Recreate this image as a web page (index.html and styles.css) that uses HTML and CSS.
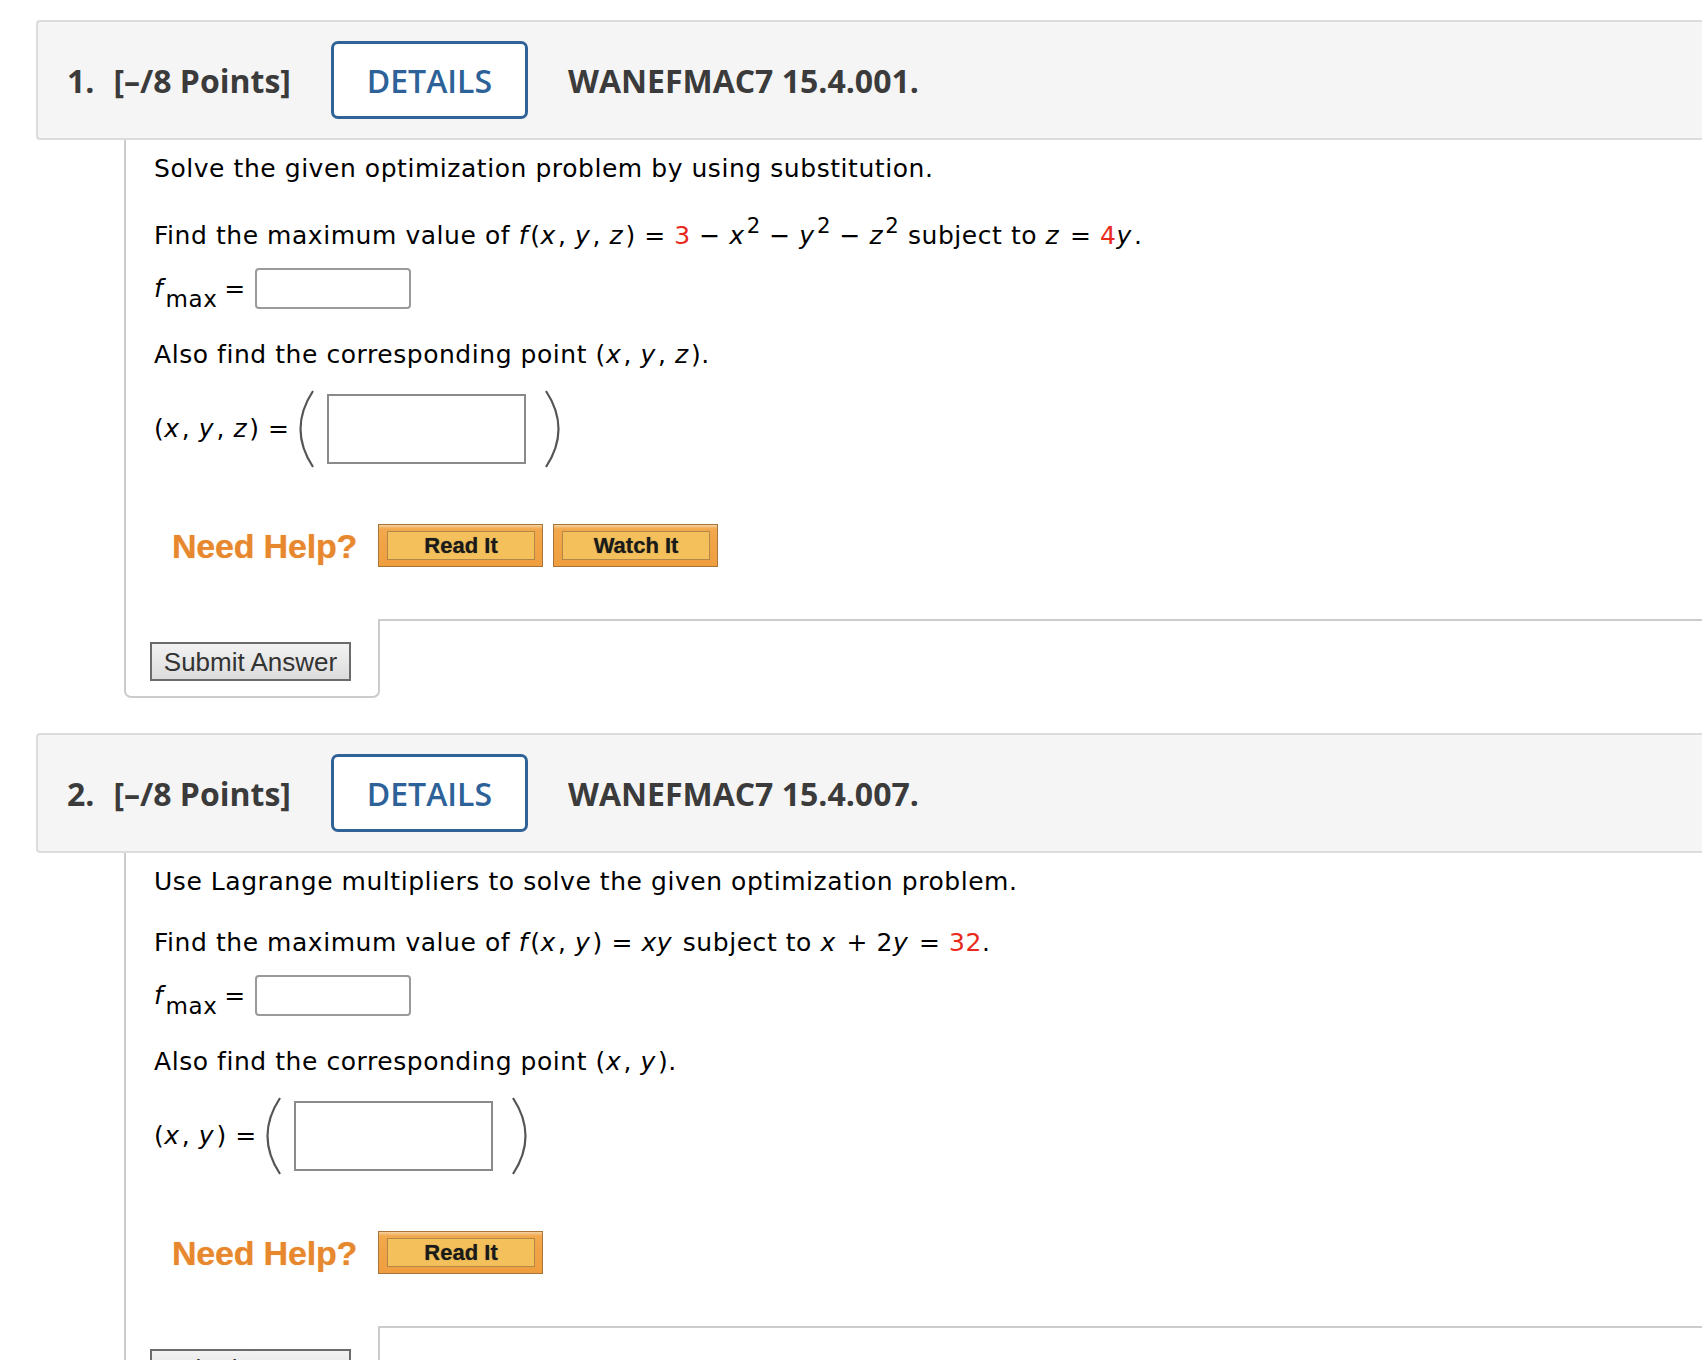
FILE: index.html
```html
<!DOCTYPE html>
<html lang="en">
<head>
<meta charset="utf-8">
<title>WebAssign</title>
<link rel="stylesheet" href="styles.css">
</head>
<body>
<div class="page">

  <section class="question">
    <header class="qhead">
      <span class="qnum">1.</span>
      <span class="qpts">[–/8 Points]</span>
      <button class="details">DETAILS</button>
      <span class="qid">WANEFMAC7 15.4.001.</span>
    </header>
    <div class="qbody">
      <div class="content">
        <p class="intro">Solve the given optimization problem by using substitution.</p>
        <p class="find">Find the maximum value of <i>f</i>(<i>x</i>, <i>y</i>, <i>z</i>) = <span class="red">3</span> − <i>x</i><sup>2</sup> − <i>y</i><sup>2</sup> − <i>z</i><sup>2</sup> subject to <i>z</i> = <span class="red">4</span><i>y</i>.</p>
        <div class="fmax"><span class="fm"><i>f</i><sub>max</sub></span><span class="eq">=</span><span class="inbox"></span></div>
        <p class="also">Also find the corresponding point (<i>x</i>, <i>y</i>, <i>z</i>).</p>
        <div class="point">
          <span class="lbl">(<i>x</i>, <i>y</i>, <i>z</i>) =</span>
          <svg class="paren" width="18" height="78" viewBox="0 0 18 78"><path d="M15 1 Q2.5 20 2.5 39 Q2.5 58 15 77" fill="none" stroke="#555" stroke-width="2.2"/></svg>
          <span class="bigbox"></span>
          <svg class="paren" width="18" height="78" viewBox="0 0 18 78"><path d="M3 1 Q15.5 20 15.5 39 Q15.5 58 3 77" fill="none" stroke="#555" stroke-width="2.2"/></svg>
        </div>
        <div class="help">
          <span class="need">Need Help?</span>
          <span class="hbtn"><span class="hin">Read It</span></span>
          <span class="hbtn"><span class="hin">Watch It</span></span>
        </div>
      </div>
      <div class="foot">
        <div class="tab"><button class="submit">Submit Answer</button></div>
        <div class="rest"></div>
      </div>
    </div>
  </section>

  <section class="question">
    <header class="qhead">
      <span class="qnum">2.</span>
      <span class="qpts">[–/8 Points]</span>
      <button class="details">DETAILS</button>
      <span class="qid">WANEFMAC7 15.4.007.</span>
    </header>
    <div class="qbody">
      <div class="content">
        <p class="intro">Use Lagrange multipliers to solve the given optimization problem.</p>
        <p class="find flat">Find the maximum value of <i>f</i>(<i>x</i>, <i>y</i>) = <i>xy</i> subject to <i>x</i> + 2<i>y</i> = <span class="red">32</span>.</p>
        <div class="fmax"><span class="fm"><i>f</i><sub>max</sub></span><span class="eq">=</span><span class="inbox"></span></div>
        <p class="also">Also find the corresponding point (<i>x</i>, <i>y</i>).</p>
        <div class="point">
          <span class="lbl">(<i>x</i>, <i>y</i>) =</span>
          <svg class="paren" width="18" height="78" viewBox="0 0 18 78"><path d="M15 1 Q2.5 20 2.5 39 Q2.5 58 15 77" fill="none" stroke="#555" stroke-width="2.2"/></svg>
          <span class="bigbox"></span>
          <svg class="paren" width="18" height="78" viewBox="0 0 18 78"><path d="M3 1 Q15.5 20 15.5 39 Q15.5 58 3 77" fill="none" stroke="#555" stroke-width="2.2"/></svg>
        </div>
        <div class="help">
          <span class="need">Need Help?</span>
          <span class="hbtn"><span class="hin">Read It</span></span>
        </div>
      </div>
      <div class="foot">
        <div class="tab"><button class="submit">Submit Answer</button></div>
        <div class="rest"></div>
      </div>
    </div>
  </section>

</div>
</body>
</html>
```

FILE: styles.css
```css
html, body {
  margin: 0;
  padding: 0;
  background: #fff;
  overflow: hidden;
}
.page {
  padding: 20px 0 0 36px;
  font-family: "DejaVu Sans", Verdana, sans-serif;
  color: #000;
}
.question {
  margin-bottom: 35px;
}
.qhead {
  display: flex;
  align-items: center;
  height: 116px;
  background: #f5f5f5;
  border: 2px solid #dcdcdc;
  border-right: none;
  border-radius: 4px 0 0 4px;
  padding-left: 29px;
  font-family: "Open Sans", sans-serif;
  font-weight: 700;
  font-size: 32px;
  color: #3b3b3b;
}
.qnum {
  margin-right: 19px;
}
.qpts {
  margin-right: 40px;
}
.details {
  box-sizing: border-box;
  width: 197px;
  height: 78px;
  border: 3px solid #2f6296;
  border-radius: 7px;
  background: #fff;
  color: #2d6298;
  font-family: "Open Sans", sans-serif;
  font-weight: 600;
  font-size: 32px;
  padding: 0;
  margin-right: 40px;
}
.qbody {
  margin-left: 88px;
}
.content {
  border-left: 2px solid #cccccc;
  padding: 14px 0 52px 28px;
  font-size: 25px;
  letter-spacing: 0.55px;
  line-height: 30px;
}
.content p {
  margin: 0;
}
.content i {
  font-style: italic;
  margin-right: 2.2px;
}
.red {
  color: #e8291c;
}
sup {
  font-size: 0.85em;
  line-height: 0;
  vertical-align: 0.5em;
}
.content .find {
  margin-top: 37px;
}
.content .find.flat {
  margin-top: 31px;
}
.fmax {
  display: flex;
  align-items: center;
  margin-top: 17px;
  height: 41px;
}
.fm sub {
  font-size: 0.92em;
  line-height: 0;
  vertical-align: -0.45em;
}
.eq {
  margin: 0 9px 0 7px;
}
.inbox {
  display: inline-block;
  box-sizing: border-box;
  width: 156px;
  height: 41px;
  border: 2px solid #9a9a9a;
  border-radius: 4px;
  background: #fff;
}
.content .also {
  margin-top: 31px;
}
.point {
  display: flex;
  align-items: center;
  margin-top: 20px;
  height: 78px;
}
.lbl {
  margin-right: 8px;
}
.paren {
  display: block;
}
.bigbox {
  display: inline-block;
  box-sizing: border-box;
  width: 199px;
  height: 70px;
  border: 2px solid #8a8a8a;
  margin: 0 17px 0 11px;
}
.help {
  display: flex;
  align-items: center;
  margin: 56px 0 0 18px;
  height: 43px;
  letter-spacing: 0;
}
.need {
  font-family: "Liberation Sans", Arial, sans-serif;
  font-weight: 700;
  font-size: 34px;
  letter-spacing: -0.2px;
  color: #e8882e;
  margin-right: 21px;
  text-shadow: 0 0 1px rgba(232,136,46,0.6);
}
.hbtn {
  box-sizing: border-box;
  display: flex;
  width: 165px;
  height: 43px;
  padding: 6px 7px 6px 8px;
  border: 1px solid #a8743a;
  background: linear-gradient(#f6d2a0 0, #f2a84c 4px, #ef9e3e 100%);
  margin-right: 10px;
}
.hin {
  flex: 1;
  display: flex;
  align-items: center;
  justify-content: center;
  border: 1px solid #b38748;
  background: #f3c05c;
  font-family: "Liberation Sans", Arial, sans-serif;
  font-weight: 700;
  font-size: 22px;
  color: #1a1a1a;
  text-shadow: 0 0 1px rgba(0,0,0,0.5);
}
.foot {
  display: flex;
}
.tab {
  box-sizing: border-box;
  width: 256px;
  height: 79px;
  border: 2px solid #cccccc;
  border-top: none;
  border-radius: 0 0 7px 7px;
  padding: 23px 0 0 24px;
}
.rest {
  flex: 1;
  border-top: 2px solid #cccccc;
}
.submit {
  box-sizing: border-box;
  width: 201px;
  height: 39px;
  border: 2px solid #6b6b6b;
  background: linear-gradient(#f2f2f2, #dcdcdc);
  font-family: "Liberation Sans", Arial, sans-serif;
  font-size: 26px;
  color: #333;
  padding: 0;
  line-height: 1;
}
```
